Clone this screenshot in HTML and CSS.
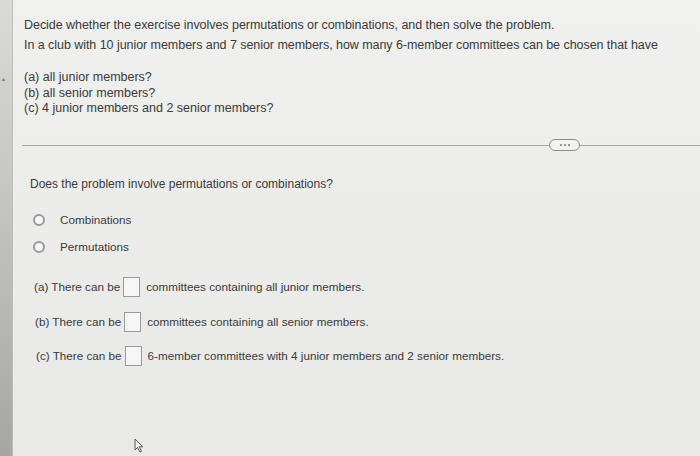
FILE: index.html
```html
<!DOCTYPE html>
<html>
<head>
<meta charset="utf-8">
<link rel="stylesheet" href="styles.css">
</head>
<body>
<div class="page">
  <div class="sidebar"><span class="tick">&#9652;</span></div>
  <div class="main">
    <div class="intro">
      <p class="line1">Decide whether the exercise involves permutations or combinations, and then solve the problem.</p>
      <p class="line2">In a club with 10 junior members and 7 senior members, how many 6-member committees can be chosen that have</p>
      <ul class="parts">
        <li>(a) all junior members?</li>
        <li>(b) all senior members?</li>
        <li>(c) 4 junior members and 2 senior members?</li>
      </ul>
    </div>
    <div class="divider">
      <span class="pill"><i></i><i></i><i></i></span>
    </div>
    <div class="question">
      <p class="ask">Does the problem involve permutations or combinations?</p>
      <div class="options">
        <label class="opt"><span class="radio"></span>Combinations</label>
        <label class="opt"><span class="radio"></span>Permutations</label>
      </div>
      <div class="answers">
        <div class="ans a1">(a) There can be <span class="box"></span> committees containing all junior members.</div>
        <div class="ans a2">(b) There can be <span class="box"></span> committees containing all senior members.</div>
        <div class="ans a3">(c) There can be <span class="box"></span> 6-member committees with 4 junior members and 2 senior members.</div>
      </div>
      <div class="cursor-row">
        <svg class="cursor" width="10" height="15" viewBox="0 0 10 15"><path d="M1 1 L1 12 L3.5 9.5 L6 14 L7.5 13.3 L5.2 8.8 L8.8 8.8 Z" fill="#f4f4f4" stroke="#555" stroke-width="1"/></svg>
      </div>
    </div>
  </div>
</div>
</body>
</html>
```
FILE: styles.css
```css
html, body {
  margin: 0;
  padding: 0;
}
body {
  width: 700px;
  height: 456px;
  overflow: hidden;
  background: #ececeb;
  font-family: "Liberation Sans", Arial, sans-serif;
  font-size: 12.5px;
  color: #3a3a3a;
}
.page {
  display: flex;
  height: 456px;
  background: linear-gradient(180deg, #f0f0ef 0%, #ebebea 60%, #e9e9e8 100%);
}
.sidebar {
  width: 12px;
  flex: none;
  background: linear-gradient(180deg, #dadad8 0%, #c4c5c2 45%, #a6a7a3 100%);
  border-right: 1px solid #bdbdbb;
  position: relative;
}
.tick {
  position: absolute;
  left: 2px;
  top: 75px;
  font-size: 6px;
  color: #777;
}
.main {
  flex: 1;
  display: flex;
  flex-direction: column;
}
.main > * { flex: none; }
p { margin: 0; }
.intro {
  padding: 18px 0 0 11px;
}
.line1 { letter-spacing: -0.05px; }
.line2 { margin-top: 6px; letter-spacing: -0.05px; }
.parts {
  list-style: none;
  margin: 18px 0 0 0;
  padding: 0;
  line-height: 15.5px;
}
.divider {
  margin-top: 28px;
  margin-left: 9px;
  height: 1px;
  background: #a8a8a6;
  position: relative;
}
.pill {
  position: absolute;
  left: 527px;
  top: -6px;
  width: 31px;
  height: 12px;
  box-sizing: border-box;
  border: 1px solid #8e8e8c;
  border-radius: 6px;
  background: #f2f2f1;
  display: flex;
  justify-content: center;
  align-items: center;
  gap: 2px;
}
.pill i {
  width: 2px;
  height: 2px;
  background: #777;
  border-radius: 1px;
}
.question {
  padding: 31px 0 0 17px;
  font-size: 12px;
}
.options {
  margin-top: 21px;
  display: flex;
  flex-direction: column;
  gap: 11px;
  font-size: 11.7px;
}
.opt {
  display: flex;
  align-items: center;
  height: 16px;
  padding-left: 30px;
  position: relative;
}
.radio {
  position: absolute;
  left: 3px;
  width: 8px;
  height: 8px;
  border: 2px solid #999;
  border-radius: 50%;
  background: #f7f7f7;
}
.answers {
  margin-top: 22px;
  padding-left: 4px;
  display: flex;
  flex-direction: column;
  gap: 14px;
  font-size: 11.7px;
}
.ans {
  display: flex;
  align-items: center;
  height: 20px;
  white-space: nowrap;
}
.box {
  display: inline-block;
  width: 15px;
  height: 18px;
  border: 1px solid #9a9a9a;
  background: #f6f6f6;
  margin: 0 6px 0 3px;
}
.a2 { padding-left: 1px; margin-top: 1px; }
.a3 { padding-left: 2px; }
.cursor-row {
  margin-top: 72px;
  padding-left: 104px;
}
.cursor { display: block; }
```
